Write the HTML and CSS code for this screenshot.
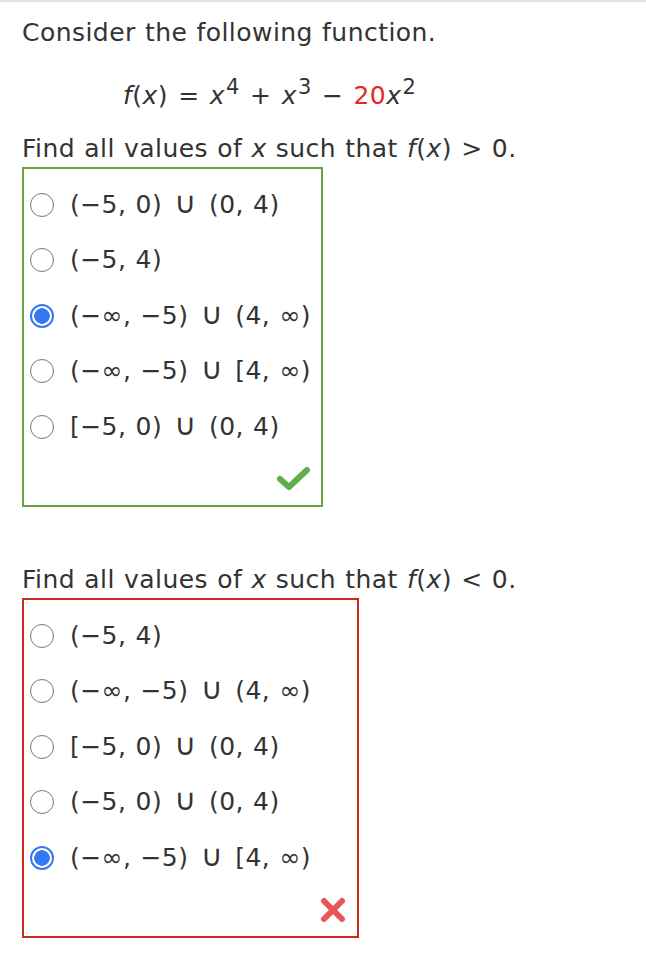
FILE: index.html
```html
<!DOCTYPE html>
<html>
<head>
<meta charset="utf-8">
<link rel="stylesheet" href="styles.css">
</head>
<body>
<div class="topline"></div>
<div class="page">
  <p class="intro">Consider the following function.</p>
  <p class="formula"><i>f</i>(<i>x</i>) <span class="op">=</span> <i>x</i><sup>4</sup> <span class="op">+</span> <i>x</i><sup>3</sup> <span class="op">−</span> <span class="red">20</span><i>x</i><sup>2</sup></p>
  <p class="question">Find all values of <i>x</i> such that <i>f</i>(<i>x</i>) &gt; 0.</p>
  <div class="box correct">
    <div class="opt"><span class="radio"></span><span>(−5, 0) <span class="cup">∪</span> (0, 4)</span></div>
    <div class="opt"><span class="radio"></span><span>(−5, 4)</span></div>
    <div class="opt"><span class="radio on"></span><span>(−∞, −5) <span class="cup">∪</span> (4, ∞)</span></div>
    <div class="opt"><span class="radio"></span><span>(−∞, −5) <span class="cup">∪</span> [4, ∞)</span></div>
    <div class="opt"><span class="radio"></span><span>[−5, 0) <span class="cup">∪</span> (0, 4)</span></div>
    <div class="mark">
      <svg width="34" height="26" viewBox="0 0 34 26"><path d="M3 14 L12 22 L30 5" fill="none" stroke="#5fae4b" stroke-width="6" stroke-linecap="round" stroke-linejoin="round"/></svg>
    </div>
  </div>
  <p class="question second">Find all values of <i>x</i> such that <i>f</i>(<i>x</i>) &lt; 0.</p>
  <div class="box wrong">
    <div class="opt"><span class="radio"></span><span>(−5, 4)</span></div>
    <div class="opt"><span class="radio"></span><span>(−∞, −5) <span class="cup">∪</span> (4, ∞)</span></div>
    <div class="opt"><span class="radio"></span><span>[−5, 0) <span class="cup">∪</span> (0, 4)</span></div>
    <div class="opt"><span class="radio"></span><span>(−5, 0) <span class="cup">∪</span> (0, 4)</span></div>
    <div class="opt"><span class="radio on"></span><span>(−∞, −5) <span class="cup">∪</span> [4, ∞)</span></div>
    <div class="mark">
      <svg width="28" height="28" viewBox="0 0 28 28"><path d="M5 5 L23 23 M23 5 L5 23" fill="none" stroke="#e8565a" stroke-width="6" stroke-linecap="round"/></svg>
    </div>
  </div>
</div>
</body>
</html>
```
FILE: styles.css
```css
html, body {
  margin: 0;
  padding: 0;
  background: #fff;
}
body {
  font-family: "DejaVu Sans", Verdana, sans-serif;
  font-size: 25px;
  letter-spacing: 0.45px;
  word-spacing: 0.8px;
  color: #333;
}
.topline {
  height: 2px;
  background: #e3e3e3;
}
.page {
  padding-left: 22px;
}
p {
  margin: 0;
}
.intro {
  margin-top: 16px;
  line-height: 30px;
}
.formula {
  margin-top: 33px;
  padding-left: 101px;
  line-height: 30px;
}
.formula .op {
  padding: 0 1px;
}
.formula sup {
  font-size: 21px;
  vertical-align: 10px;
  line-height: 0;
  margin-left: 1px;
}
.red {
  color: #e8281e;
}
.question {
  margin-top: 23px;
  line-height: 30px;
}
.question.second {
  margin-top: 58px;
}
.box {
  box-sizing: border-box;
  margin-top: 3px;
  display: flex;
  flex-direction: column;
  padding: 8px 0 0 6px;
}
.correct {
  width: 301px;
  height: 340px;
  border: 2px solid #6d9e3f;
}
.wrong {
  width: 337px;
  height: 340px;
  border: 2px solid #cd2a1e;
}
.opt {
  display: flex;
  align-items: center;
  height: 55.5px;
  gap: 16px;
  line-height: 30px;
}
.cup {
  font-size: 30px;
  line-height: 0;
  padding: 0 3px;
}
.radio {
  box-sizing: border-box;
  width: 24px;
  height: 24px;
  border-radius: 50%;
  border: 1.6px solid #777;
  flex: none;
}
.radio.on {
  border: 2px solid #3478f6;
  background: radial-gradient(circle, #3478f6 0 7.5px, #fff 8px);
}
.mark {
  display: flex;
  justify-content: flex-end;
  padding-right: 10px;
  margin-top: 10px;
}
```
